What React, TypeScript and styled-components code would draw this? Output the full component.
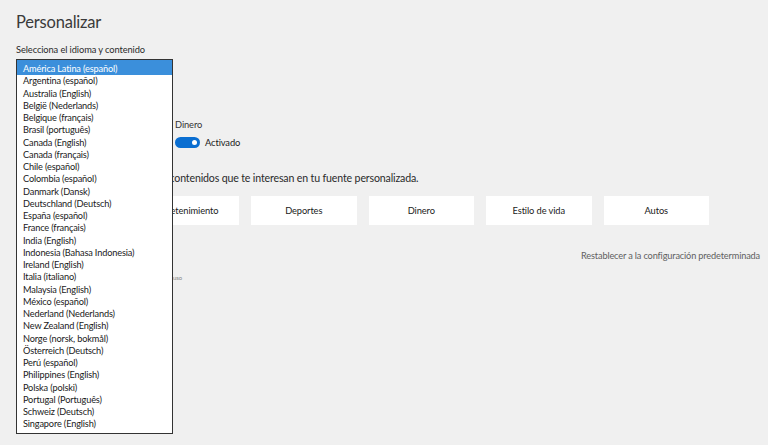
import React from "react";
import styled, { createGlobalStyle } from "styled-components";

const GlobalStyle = createGlobalStyle`
  html, body {
    margin: 0;
    padding: 0;
    background: #f0f0f0;
    font-family: "Segoe UI", Lato, "Open Sans", sans-serif;
    color: #222;
    overflow: hidden;
  }
`;

const regions = [
  "América Latina (español)",
  "Argentina (español)",
  "Australia (English)",
  "België (Nederlands)",
  "Belgique (français)",
  "Brasil (português)",
  "Canada (English)",
  "Canada (français)",
  "Chile (español)",
  "Colombia (español)",
  "Danmark (Dansk)",
  "Deutschland (Deutsch)",
  "España (español)",
  "France (français)",
  "India (English)",
  "Indonesia (Bahasa Indonesia)",
  "Ireland (English)",
  "Italia (italiano)",
  "Malaysia (English)",
  "México (español)",
  "Nederland (Nederlands)",
  "New Zealand (English)",
  "Norge (norsk, bokmål)",
  "Österreich (Deutsch)",
  "Perú (español)",
  "Philippines (English)",
  "Polska (polski)",
  "Portugal (Português)",
  "Schweiz (Deutsch)",
  "Singapore (English)",
];

const topics = ["Noticias", "Entretenimiento", "Deportes", "Dinero", "Estilo de vida", "Autos"];

const Page = styled.main`
  position: relative;
  width: 768px;
  height: 445px;
  padding: 10px 8px 0 16px;
  box-sizing: border-box;
`;

const Title = styled.h1`
  margin: 0;
  font-size: 16.5px;
  font-weight: 400;
  letter-spacing: -0.2px;
  line-height: 24px;
  color: #3a3a3a;
`;

const Label = styled.div`
  margin-top: 9px;
  font-size: 9.3px;
  letter-spacing: -0.1px;
  line-height: 14px;
  color: #2a2a2a;
`;

const SelectBox = styled.div`
  margin-top: 6px;
  width: 156px;
  height: 24px;
  border: 1px solid #999;
  background: #fff;
  box-sizing: border-box;
`;

const Toggles = styled.div`
  display: flex;
  gap: 30px;
  margin-top: 32px;
`;

const ToggleGroup = styled.div`
  display: flex;
  flex-direction: column;
  gap: 6px;
  width: 129px;
`;

const ToggleLabel = styled.span`
  font-size: 9.3px;
  letter-spacing: -0.1px;
  line-height: 12px;
  color: #333;
`;

const ToggleRow = styled.div`
  display: flex;
  align-items: center;
  gap: 5px;
  font-size: 9.3px;
  letter-spacing: -0.1px;
  color: #1a1a1a;
`;

const Switch = styled.span`
  position: relative;
  width: 25px;
  height: 11px;
  border-radius: 6px;
  background: #0a6ed1;

  &::after {
    content: "";
    position: absolute;
    right: 3px;
    top: 3px;
    width: 5px;
    height: 5px;
    border-radius: 50%;
    background: #fff;
  }
`;

const Intro = styled.p`
  margin: 21px 0 0;
  font-size: 10.6px;
  letter-spacing: -0.15px;
  line-height: 18px;
  color: #2a2a2a;
`;

const Cards = styled.div`
  display: flex;
  gap: 12px;
  margin-top: 9px;
`;

const Card = styled.div`
  width: 105.5px;
  height: 29px;
  background: #fff;
  display: flex;
  align-items: center;
  justify-content: center;
  font-size: 9.3px;
  letter-spacing: -0.1px;
  color: #1a1a1a;
`;

const Reset = styled.div`
  margin-top: 24px;
  text-align: right;
  font-size: 9.2px;
  letter-spacing: -0.15px;
  line-height: 14px;
  color: #5f5f5f;
`;

const Legal = styled.div`
  margin-top: 11px;
  font-size: 6px;
  line-height: 8px;
  color: #888;
  padding-left: 115px;
`;

const Dropdown = styled.ul`
  position: absolute;
  left: 16px;
  top: 59px;
  width: 157px;
  margin: 0;
  padding: 0 0 2px;
  list-style: none;
  background: #fff;
  border: 1px solid #333;
  box-sizing: border-box;
`;

const Option = styled.li<{ $active?: boolean }>`
  height: 12.25px;
  line-height: 12.25px;
  padding: ${(p) => (p.$active ? "3px 6px 0" : "0 6px")};
  font-size: 9.2px;
  letter-spacing: -0.15px;
  white-space: nowrap;
  color: ${(p) => (p.$active ? "#fff" : "#1a1a1a")};
  background: ${(p) => (p.$active ? "#3b8fdb" : "transparent")};
`;

export default function App() {
  return (
    <>
      <GlobalStyle />
      <Page>
        <Title>Personalizar</Title>
        <Label>Selecciona el idioma y contenido</Label>
        <SelectBox />
        <Toggles>
          <ToggleGroup>
            <ToggleLabel>Noticias</ToggleLabel>
            <ToggleRow>
              <Switch />
              Activado
            </ToggleRow>
          </ToggleGroup>
          <ToggleGroup>
            <ToggleLabel>Dinero</ToggleLabel>
            <ToggleRow>
              <Switch />
              Activado
            </ToggleRow>
          </ToggleGroup>
        </Toggles>
        <Intro>Personaliza tu experiencia con los contenidos que te interesan en tu fuente personalizada.</Intro>
        <Cards>
          {topics.map((t) => (
            <Card key={t}>{t}</Card>
          ))}
        </Cards>
        <Reset>Restablecer a la configuración predeterminada</Reset>
        <Legal>Condiciones de uso</Legal>
        <Dropdown>
          {regions.map((r, i) => (
            <Option key={r} $active={i === 0}>
              {r}
            </Option>
          ))}
        </Dropdown>
      </Page>
    </>
  );
}
